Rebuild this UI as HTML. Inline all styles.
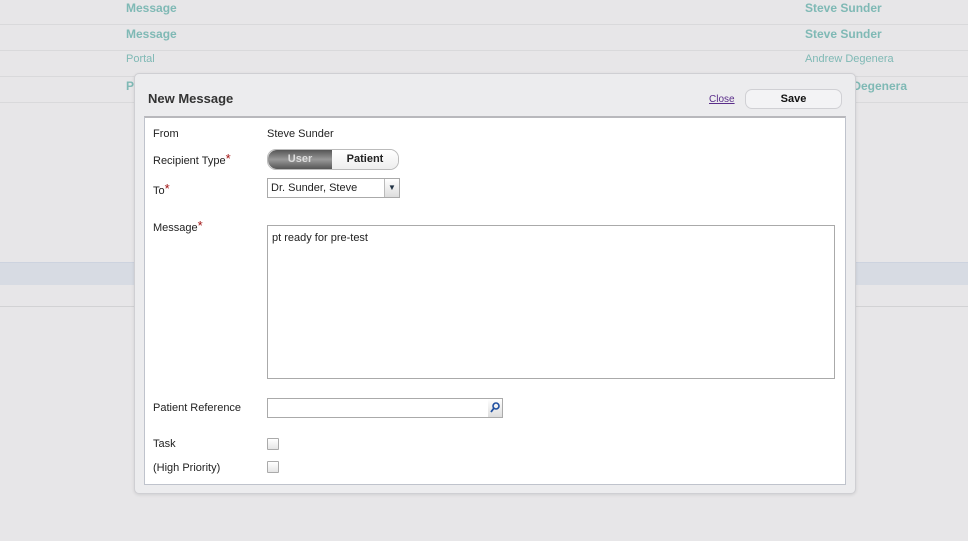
<!DOCTYPE html>
<html><head><style>
body{margin:0;width:968px;height:541px;background:#e7e6e8;font-family:"Liberation Sans",sans-serif;position:relative;overflow:hidden}
.row{position:absolute;left:0;width:968px;border-bottom:1px solid #d9d9db}
.t{position:absolute;color:#7fb9b5;font-size:12px}
.b{font-weight:bold}
.modal{position:absolute;left:134px;top:73px;width:720px;height:419px;background:#ececee;border:1px solid #cfcfd3;border-radius:5px;box-shadow:0 1px 3px rgba(0,0,0,.1)}
.inner{position:absolute;left:144px;top:116px;width:700px;height:366px;background:#fff;border:1px solid #bfc3cc;border-top:2px solid #b8b8bc}
.l{position:absolute;font-size:11px;color:#222}
.req{color:#a01010;font-size:13px;position:relative;top:-1px}
.cb{position:absolute;width:10px;height:10px;border:1px solid #aaa;background:linear-gradient(#fff,#e5e5e5);border-radius:1px}
</style></head><body>
<div class="row" style="top:0;height:24px"></div>
<div class="row" style="top:25px;height:25px"></div>
<div class="row" style="top:51px;height:25px"></div>
<div class="row" style="top:77px;height:25px"></div>
<div style="position:absolute;left:0;top:262px;width:968px;height:22px;background:#d7dbe3;border-top:1px solid #cdd3df"></div>
<div style="position:absolute;left:0;top:306px;width:968px;height:1px;background:#d2d2d4"></div>
<div class="t b" style="left:126px;top:1px">Message</div>
<div class="t b" style="left:126px;top:27px">Message</div>
<div class="t" style="left:126px;top:53px;font-size:11px">Portal</div>
<div class="t b" style="left:126px;top:79px">P</div>
<div class="t b" style="left:805px;top:1px">Steve Sunder</div>
<div class="t b" style="left:805px;top:27px">Steve Sunder</div>
<div class="t" style="left:805px;top:53px;font-size:11px">Andrew Degenera</div>
<div class="t b" style="left:805px;top:79px">Andrew Degenera</div>
<div class="modal"></div>
<div style="position:absolute;left:148px;top:91px;font-size:13px;font-weight:bold;color:#333">New Message</div>
<div style="position:absolute;left:709px;top:94px;font-size:10px;color:#5a2d8a;text-decoration:underline">Close</div>
<div style="position:absolute;left:745px;top:89px;width:95px;height:18px;border:1px solid #d0d0d4;border-radius:7px;background:#f3f3f5;text-align:center;font-size:11px;font-weight:bold;line-height:18px;color:#111">Save</div>
<div class="inner"></div>
<div class="l" style="left:153px;top:128px">From</div>
<div class="l" style="left:267px;top:128px">Steve Sunder</div>
<div class="l" style="left:153px;top:152px">Recipient Type<span class="req">*</span></div>
<div style="position:absolute;left:267px;top:149px;width:130px;height:19px;border:1px solid #bbb;border-radius:9px;overflow:hidden;background:#fff;font-size:11px;font-weight:bold">
<div style="position:absolute;left:0;top:0;width:64px;height:19px;background:linear-gradient(#555,#999 50%,#555);color:#ddd;text-align:center;line-height:19px;border-radius:9px 0 0 9px">User</div>
<div style="position:absolute;left:64px;top:0;width:66px;height:19px;text-align:center;line-height:19px;color:#222;background:linear-gradient(#fff,#eee)">Patient</div></div>
<div class="l" style="left:153px;top:182px">To<span class="req">*</span></div>
<div style="position:absolute;left:267px;top:178px;width:131px;height:18px;border:1px solid #aaa;background:#fff;font-size:11px;line-height:18px;color:#222">
<span style="padding-left:3px">Dr. Sunder, Steve</span>
<div style="position:absolute;right:0;top:0;width:14px;height:18px;border-left:1px solid #bbb;background:linear-gradient(#fff,#ddd);text-align:center;font-size:8px;color:#234">&#9660;</div></div>
<div class="l" style="left:153px;top:219px">Message<span class="req">*</span></div>
<div style="position:absolute;left:267px;top:225px;width:566px;height:152px;border:1px solid #aaa;background:#fff"></div>
<div class="l" style="left:272px;top:232px">pt ready for pre-test</div>
<div class="l" style="left:153px;top:402px">Patient Reference</div>
<div style="position:absolute;left:267px;top:398px;width:234px;height:18px;border:1px solid #aaa;background:#fff">
<div style="position:absolute;right:0;top:0;width:14px;height:18px;background:linear-gradient(#fff,#ddd)"><svg width="14" height="18"><circle cx="8" cy="7" r="3" fill="none" stroke="#1f4fa0" stroke-width="1.6"/><line x1="6" y1="9" x2="3" y2="13" stroke="#1f4fa0" stroke-width="1.8"/></svg></div></div>
<div class="l" style="left:153px;top:438px">Task</div>
<div class="cb" style="left:267px;top:438px"></div>
<div class="l" style="left:153px;top:462px">(High Priority)</div>
<div class="cb" style="left:267px;top:461px"></div>
</body></html>
